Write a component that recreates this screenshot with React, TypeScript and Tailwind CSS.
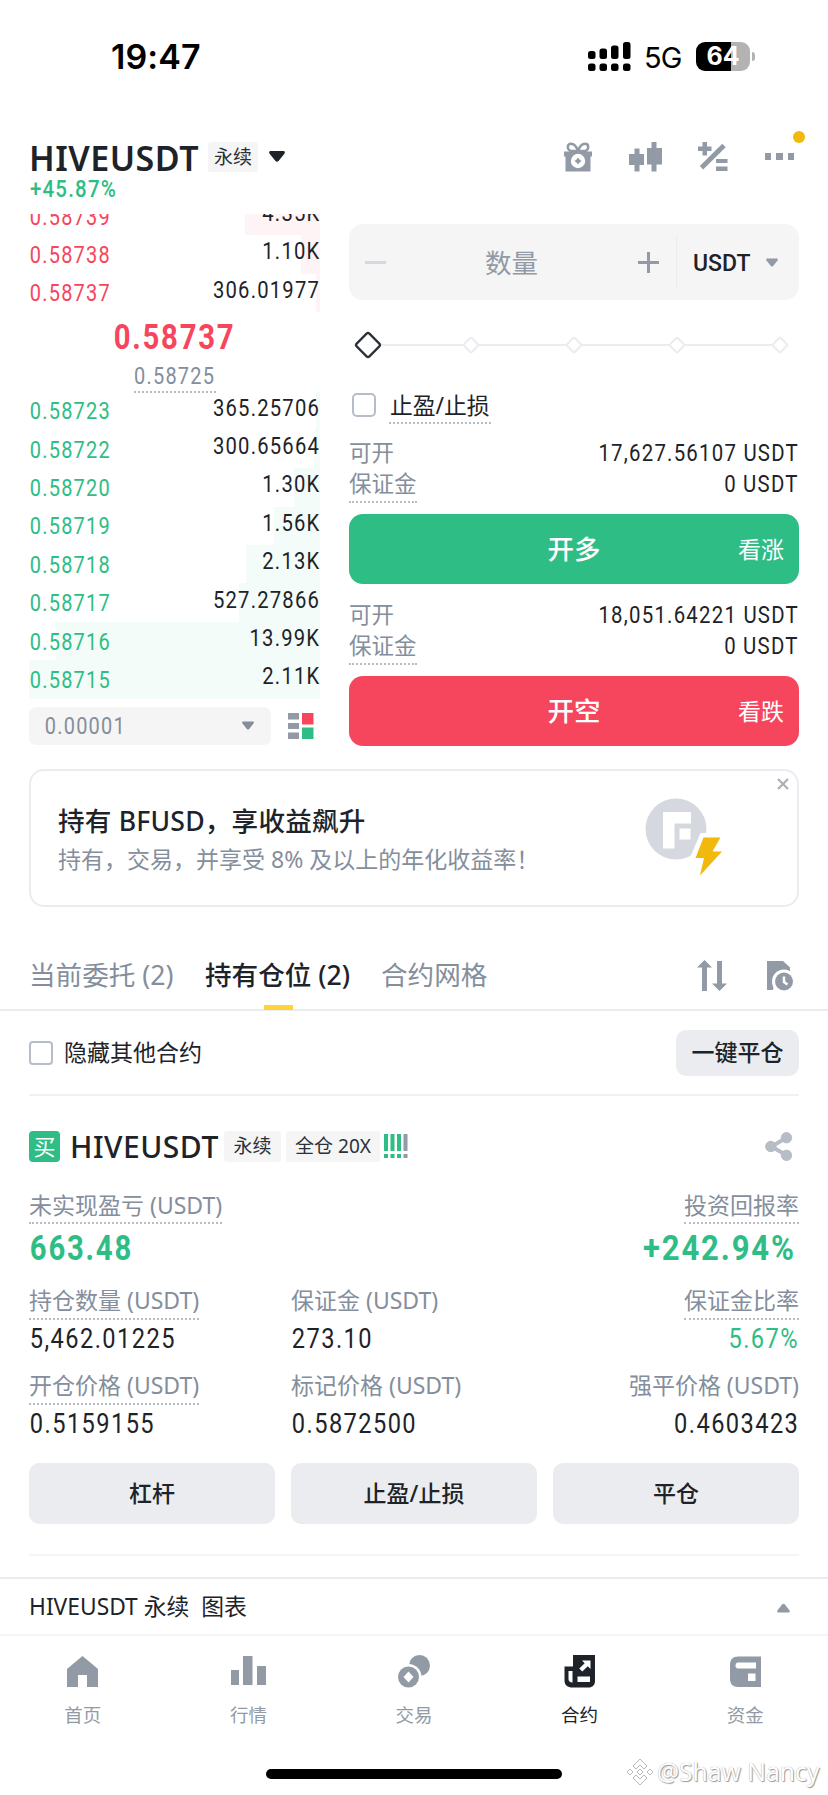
import type { ReactNode } from 'react';
import clsx from 'clsx';

type Level = { price: string; amount: string; depth: number };

const asks: Level[] = [
  { price: '0.58739', amount: '4.35K', depth: 75 },
  { price: '0.58738', amount: '1.10K', depth: 19 },
  { price: '0.58737', amount: '306.01977', depth: 4 },
];

const bids: Level[] = [
  { price: '0.58723', amount: '365.25706', depth: 4 },
  { price: '0.58722', amount: '300.65664', depth: 6 },
  { price: '0.58720', amount: '1.30K', depth: 26 },
  { price: '0.58719', amount: '1.56K', depth: 46 },
  { price: '0.58718', amount: '2.13K', depth: 74 },
  { price: '0.58717', amount: '527.27866', depth: 81 },
  { price: '0.58716', amount: '13.99K', depth: 264 },
  { price: '0.58715', amount: '2.11K', depth: 291 },
];

// Narrow, slightly spaced digits
function Num({ children, className, right }: { children: ReactNode; className?: string; right?: boolean }) {
  return (
    <span
      className={clsx(
        "inline-block scale-x-[0.85] whitespace-nowrap font-['Roboto',sans-serif] tracking-[0.06em]",
        right ? 'origin-right' : 'origin-left pl-px',
        className
      )}
    >
      {children}
    </span>
  );
}

function Dotted({ children, className }: { children: ReactNode; className?: string }) {
  return (
    <span className={clsx('border-b-2 border-dotted border-[#b7bdc6]', className)}>{children}</span>
  );
}

function Caret({ className, up }: { className?: string; up?: boolean }) {
  return (
    <svg viewBox="0 0 16 11" className={clsx(className, up && 'rotate-180')} fill="currentColor">
      <path d="M1.6 0h12.8c1 0 1.6.8 1.4 1.7-.1.7-.5 1.300-1 1.800L9.500 10c-.9 1.100-2.100 1.100-3 0L1.200 3.500C.7 3 .3 2.400.2 1.700 0 .8.600 0 1.600 0z" />
    </svg>
  );
}

function StatusBar() {
  return (
    <div className="flex h-[112px] items-center pl-[111px] pr-[73px] font-['Inter',sans-serif] text-black">
      <span className="mt-[2px] text-[34px] font-semibold leading-none tracking-[0.1px]">19:47</span>
      <svg className="ml-auto h-[29px] w-[43px]" viewBox="0 0 43 29">
        <rect x="0" y="9" width="7.500" height="8" rx="2.500" />
        <rect x="11.500" y="6.500" width="7.500" height="10.500" rx="2.500" />
        <rect x="23" y="3.500" width="7.500" height="13.500" rx="2.500" />
        <rect x="35" y="0" width="7.500" height="17" rx="2.500" />
        <rect x="0" y="21.500" width="7.500" height="7.500" rx="2.500" />
        <rect x="11.500" y="21.500" width="7.500" height="7.500" rx="2.500" />
        <rect x="23" y="21.500" width="7.500" height="7.500" rx="2.500" />
        <rect x="35" y="21.500" width="7.500" height="7.500" rx="2.500" />
      </svg>
      <span className="ml-[13px] mt-[3px] w-[38px] text-[29px] leading-none tracking-[-1px]">5G</span>
      <div className="ml-[14px] flex h-[29px] w-[54px] items-center justify-center rounded-[9px] bg-[linear-gradient(90deg,#000_64%,#b3b3b3_64%)] pt-px text-[25px] font-bold leading-none text-white">
        64
      </div>
      <div className="ml-[2px] h-[9px] w-[3px] rounded-r-full bg-[#b3b3b3]" />
    </div>
  );
}

function GiftIcon() {
  return (
    <svg className="h-[30px] w-[28px]" viewBox="0 0 28 30" fill="currentColor">
      <path d="M0 9.500h28v5h-1.500V29.500h-25v-15H0z" />
      <path d="M14 9C12 3.500 9.500 1.800 7 1.800c-2 0-3.200 1.400-3.200 3.100C3.800 7 5.500 9 8 9zM14 9c2-5.500 4.500-7.200 7-7.200 2 0 3.200 1.400 3.200 3.100C24.200 7 22.500 9 20 9z" fill="none" stroke="currentColor" strokeWidth="2.600" />
      <circle cx="14" cy="19" r="7.200" fill="#fff" />
      <path d="M14 15.500l1.500 2 2 1.500-2 1.500-1.500 2-1.500-2-2-1.500 2-1.500z" />
    </svg>
  );
}

function Header() {
  return (
    <div className="h-[102px] pl-[29px]">
      <div className="flex h-[65px] items-center pr-[34px] pt-[24px]">
        <h1 className="mt-[2px] w-[170px] text-[34px] font-semibold leading-none tracking-[0.5px] text-[#1e2329]">HIVEUSDT</h1>
        <span className="ml-[9px] flex h-[30px] w-[50px] items-center justify-center rounded-[3px] bg-[#f5f5f5] pt-px text-[19px] leading-none text-[#2b3139]">永续</span>
        <Caret className="ml-[11px] h-[11px] w-[16px] text-[#1e2329]" />
        <div className="ml-auto flex items-center text-[#929aa5]">
          <GiftIcon />
          <svg className="ml-[37px] h-[30px] w-[33px]" viewBox="0 0 33 30" fill="currentColor">
            <path d="M5.500 6.500h5V12H15v11h-4.500v6.500h-5V23H0V12h5.500zM22.500 0h5v6H33v16.500h-5.500v7h-5v-7H18V6h4.500z" />
          </svg>
          <svg className="ml-[36px] h-[30px] w-[30px]" viewBox="0 0 30 30" fill="currentColor">
            <path d="M4.500 0h4.500v4.500h4.500V9H9v4.500H4.500V9H0V4.500h4.500zM24.300 1.800l3.400 3.400-22.500 22.300-3.400-3.400zM18 17h11.500v4H18zM18 24.500h11.500v4.500H18z" />
          </svg>
          <div className="relative ml-[37px] flex gap-[5px]">
            <i className="h-[6.500px] w-[6.500px] bg-current" />
            <i className="h-[6.500px] w-[6.500px] bg-current" />
            <i className="h-[6.500px] w-[6.500px] bg-current" />
            <b className="absolute -right-[11px] -top-[22px] h-[12px] w-[12px] rounded-full bg-[#f0b90b]" />
          </div>
        </div>
      </div>
      <Num className="scale-x-[0.89]! text-[23px] font-medium leading-[26px] text-[#2ebd85]">+45.87%</Num>
    </div>
  );
}

function BookRow({ level, side }: { level: Level; side: 'ask' | 'bid' }) {
  return (
    <div className="relative flex h-[38.400px] shrink-0 items-center justify-between">
      <div
        className={clsx('absolute inset-y-0 right-0', side === 'ask' ? 'bg-[#fff4f5]' : 'bg-[#f3fcf8]')}
        style={{ width: level.depth }}
      />
      <Num className={clsx('relative mt-px text-[23.500px] font-[450] leading-[38px]', side === 'ask' ? 'text-[#f6465d]' : 'text-[#2ebd85]')}>
        {level.price}
      </Num>
      <Num right className="relative -mt-[6px] text-[23.800px] font-[450] leading-[38px] text-[#1e2329]">{level.amount}</Num>
    </div>
  );
}

function OrderBook() {
  return (
    <div className="w-[291px]">
      <div className="flex h-[98px] flex-col justify-end overflow-hidden">
        {asks.map((l) => (
          <BookRow key={l.price} level={l} side="ask" />
        ))}
      </div>
      <div className="flex h-[79.500px] flex-col items-center pt-[5px]">
        <Num className="origin-center! text-[34.500px] font-bold leading-[40px] text-[#f6465d]">0.58737</Num>
        <Dotted className="mt-px flex h-[35px] w-[82px] justify-center">
          <Num className="origin-center! text-[23.500px] leading-[36px] text-[#848e9c]">0.58725</Num>
        </Dotted>
      </div>
      {bids.map((l) => (
        <BookRow key={l.price} level={l} side="bid" />
      ))}
      <div className="mt-[8px] flex h-[38px] items-center">
        <div className="flex h-full w-[242px] items-center justify-between rounded-[7px] bg-[#f5f5f5] pl-[15px] pr-[17px] text-[#848e9c]">
          <Num className="text-[23.500px] leading-[38px]">0.00001</Num>
          <Caret className="h-[9px] w-[12px]" />
        </div>
        <svg className="ml-[17px] h-[26px] w-[26px]" viewBox="0 0 26 26">
          <path d="M0 0h11v6.500H0zM0 10h11v6H0zM0 19.500h11V26H0z" fill="#929aa5" />
          <path d="M14 0h11.500v11.500H14z" fill="#f6465d" />
          <path d="M14 14.500h11.500V26H14z" fill="#2ebd85" />
        </svg>
      </div>
    </div>
  );
}

function Slider() {
  return (
    <svg className="mt-[30px] h-[30px] w-[450px]" viewBox="0 0 450 30" fill="#fff" stroke="#eaecef" strokeWidth="2">
      <path d="M33 15H423" />
      {[122, 225, 328, 431].map((x) => (
        <rect key={x} x={x - 5.5} y="9.500" width="11" height="11" rx="1.500" transform={`rotate(45 ${x} 15)`} />
      ))}
      <rect x="10" y="6" width="18" height="18" rx="2" transform="rotate(45 19 15)" stroke="#2b3139" strokeWidth="2.300" />
    </svg>
  );
}

function SideInfo({ max }: { max: string }) {
  return (
    <div className="text-[22.500px] text-[#848e9c]">
      <div className="flex h-[30px] items-center justify-between pt-[2px]">
        <span className="leading-none">可开</span>
        <Num right className="text-[24px] font-[450] leading-none text-[#1e2329]">{max} USDT</Num>
      </div>
      <div className="flex h-[36px] items-start justify-between">
        <Dotted className="h-[36px] leading-[33px]">保证金</Dotted>
        <Num right className="text-[24px] font-[450] leading-[34px] text-[#1e2329]">0 USDT</Num>
      </div>
    </div>
  );
}

function SideButton({ label, hint, className }: { label: string; hint: string; className: string }) {
  return (
    <button className={clsx('relative flex h-[70px] w-full items-center justify-center rounded-[14px] text-white', className)}>
      <span className="text-[26.500px] font-medium leading-none">{label}</span>
      <span className="absolute right-[15px] text-[23px] leading-none">{hint}</span>
    </button>
  );
}

function TradeForm() {
  return (
    <div className="w-[450px] pt-[10px]">
      <div className="flex h-[76px] items-center rounded-[14px] bg-[#f5f5f5]">
        <i className="ml-[16px] h-[3px] w-[21px] bg-[#d5d9df]" />
        <span className="ml-[99px] mt-[3px] text-[26.500px] leading-none text-[#929aa5]">数量</span>
        <svg className="ml-auto h-[21px] w-[21px]" viewBox="0 0 21 21" fill="none" stroke="#929aa5" strokeWidth="3">
          <path d="M0 10.500h21M10.500 0v21" />
        </svg>
        <i className="ml-[17px] h-[54px] w-px bg-[#eaecef]" />
        <span className="ml-[16px] mt-[3px] w-[73px] font-['Roboto',sans-serif] text-[23px] font-medium leading-none text-[#1e2329]">USDT</span>
        <Caret className="mr-[21px] h-[9px] w-[12px] text-[#929aa5]" />
      </div>
      <Slider />
      <div className="mt-[29px] flex h-[36px] items-start">
        <i className="ml-[3px] mt-[4px] h-[24px] w-[24px] rounded-[5px] border-2 border-[#b7bdc6]" />
        <Dotted className="ml-[13px] h-[35px] px-px text-[22.800px] leading-[33px] text-[#1e2329]">止盈/止损</Dotted>
      </div>
      <div className="mt-[12px]">
        <SideInfo max="17,627.56107" />
      </div>
      <SideButton label="开多" hint="看涨" className="mt-[11px] bg-[#2ebd85]" />
      <div className="mt-[15px]">
        <SideInfo max="18,051.64221" />
      </div>
      <SideButton label="开空" hint="看跌" className="mt-[11px] bg-[#f6465d]" />
    </div>
  );
}

function Banner() {
  return (
    <div className="relative mx-[29px] mt-[23px] h-[138px] rounded-[15px] border-2 border-[#eaecef] pl-[27px] pt-[30px]">
      <div className="text-[26.600px] font-medium leading-[40px] tracking-[0.2px] text-[#1e2329]">持有 BFUSD，享收益飙升</div>
      <div className="text-[23px] leading-[36px] text-[#848e9c]">持有，交易，并享受 8% 及以上的年化收益率！</div>
      <svg className="absolute right-[8px] top-[7px] h-[12px] w-[12px]" viewBox="0 0 12 12" stroke="#a9b0ba" strokeWidth="2.200">
        <path d="M1 1l10 10M11 1L1 11" />
      </svg>
      <svg className="absolute left-[614px] top-[27px] h-[80px] w-[80px]" viewBox="0 0 80 80">
        <circle cx="31" cy="31" r="30.500" fill="#d5d9df" />
        <path d="M18 14h28v11.500H29.500V50.500H18z" fill="#fff" />
        <path d="M34.500 30.500h11v11h-11z" fill="#fff" />
        <path d="M55.500 35L44 62l13 6 10-33z" fill="#fff" />
        <path d="M58.500 39.500H75.500L67.500 53.500H77L55 77.500l4-17.500h-8.500z" fill="#f0b90b" />
      </svg>
    </div>
  );
}

function Tabs() {
  return (
    <div className="mt-[35px] flex h-[69px] items-center border-b-2 border-[#eaecef] pl-[29px] pr-[34px] text-[26.600px] leading-none text-[#848e9c]">
      <span className="w-[176px] whitespace-nowrap">当前委托 (2)</span>
      <span className="relative flex h-full w-[146px] items-center whitespace-nowrap font-medium text-[#1e2329]">
        持有仓位 (2)
        <i className="absolute -bottom-[1px] left-[59px] h-[5px] w-[29px] bg-[#fcd535]" />
      </span>
      <span className="ml-[30px]">合约网格</span>
      <svg className="ml-auto h-[31px] w-[30px]" viewBox="0 0 30 31" fill="#929aa5">
        <path d="M7.500 0L15 7.500h-5V31H5V7.500H0zM22.500 31L15 23.500h5V1h5v22.500h5z" />
      </svg>
      <svg className="ml-[40px] h-[30px] w-[27px]" viewBox="0 0 27 30">
        <path d="M0 0h16l7 6.500V10h-5L8 18 6 29H0z" fill="#929aa5" />
        <circle cx="17" cy="20.500" r="12" fill="#fff" />
        <circle cx="17" cy="20.500" r="9" fill="#929aa5" />
        <path d="M17 15.500v5.500l3.500 2.500" fill="none" stroke="#fff" strokeWidth="2.500" />
      </svg>
    </div>
  );
}

function Field({ label, value, dotted, right, green }: { label: string; value: string; dotted?: boolean; right?: boolean; green?: boolean }) {
  return (
    <div className={clsx('flex flex-col', right ? 'items-end' : 'items-start')}>
      <span
        className={clsx(
          'h-[36px] whitespace-nowrap text-[23px] leading-[32px] text-[#848e9c]',
          dotted && 'border-b-2 border-dotted border-[#b7bdc6]'
        )}
      >
        {label}
      </span>
      <Num right={right} className={clsx('text-[27.800px] font-[450] leading-[38px]', green ? 'text-[#2ebd85]' : 'text-[#1e2329]')}>
        {value}
      </Num>
    </div>
  );
}

function Position() {
  return (
    <div className="mx-[29px] border-b-2 border-[#f5f5f5] pb-[30px] pt-[34px]">
      <div className="flex h-[32px] items-center">
        <span className="flex h-[31px] w-[31px] items-center justify-center rounded-[4px] bg-[#2ebd85] text-[22px] leading-none text-white">买</span>
        <span className="ml-[10px] mt-[2px] w-[154px] text-[30px] font-medium leading-none tracking-[0.5px] text-[#1e2329]">HIVEUSDT</span>
        <span className="flex h-[31px] w-[57px] items-center justify-center rounded-[3px] bg-[#f5f5f5] text-[19px] leading-none text-[#2b3139]">永续</span>
        <span className="ml-[5px] flex h-[31px] w-[94px] items-center justify-center whitespace-nowrap rounded-[3px] bg-[#f5f5f5] text-[19px] leading-none text-[#2b3139]">全仓 20X</span>
        <svg className="ml-[4px] h-[24px] w-[24px]" viewBox="0 0 24 24">
          <path d="M0 0h4v17H0zM6.500 0h4v17h-4zM13 0h4v17h-4zM0 20h4v4H0zM6.500 20h4v4h-4zM13 20h4v4h-4z" fill="#2ebd85" />
          <path d="M19.500 0h4v17h-4zM19.500 20h4v4h-4z" fill="#929aa5" />
        </svg>
        <svg className="ml-auto mr-[6px] h-[29px] w-[28px]" viewBox="0 0 28 29" fill="#b7bdc6" stroke="#b7bdc6">
          <path d="M21 6L6.500 14.500 21 23" fill="none" strokeWidth="4" />
          <circle cx="21.500" cy="5.700" r="5.200" />
          <circle cx="5.800" cy="14.500" r="5.200" />
          <circle cx="21.500" cy="23.300" r="5.200" />
        </svg>
      </div>
      <div className="mt-[27px] flex justify-between">
        <div className="flex flex-col items-start">
          <Dotted className="h-[35px] text-[23px] leading-[32px] text-[#848e9c]">未实现盈亏 (USDT)</Dotted>
          <Num className="text-[34.500px] font-bold leading-[48px] text-[#2ebd85]">663.48</Num>
        </div>
        <div className="flex flex-col items-end">
          <Dotted className="h-[35px] text-[23px] leading-[32px] text-[#848e9c]">投资回报率</Dotted>
          <Num right className="mr-[3px] scale-x-[0.9]! text-[34.500px] font-bold leading-[48px] text-[#2ebd85]">+242.94%</Num>
        </div>
      </div>
      <div className="mt-[12px] grid grid-cols-[262px_1fr_1fr] gap-y-[11px]">
        <Field label="持仓数量 (USDT)" value="5,462.01225" dotted />
        <Field label="保证金 (USDT)" value="273.10" />
        <Field label="保证金比率" value="5.67%" dotted right green />
        <Field label="开仓价格 (USDT)" value="0.5159155" dotted />
        <Field label="标记价格 (USDT)" value="0.5872500" />
        <Field label="强平价格 (USDT)" value="0.4603423" right />
      </div>
      <div className="mt-[20px] grid grid-cols-3 gap-[16px]">
        {['杠杆', '止盈/止损', '平仓'].map((t) => (
          <button key={t} className="h-[61px] rounded-[10px] bg-[#eaecef] text-[23px] font-medium leading-none text-[#1e2329]">
            {t}
          </button>
        ))}
      </div>
    </div>
  );
}

const nav = [
  {
    label: '首页',
    icon: <path d="M16.500 1L32 14v18H21V20h-9v12H1V14z" />,
  },
  {
    label: '行情',
    icon: <path d="M-1 15h8v15H-1zM11 1h9.500v29H11zM25 11h9v19h-9z" />,
  },
  {
    label: '交易',
    icon: (
      <>
        <circle cx="22.500" cy="10.500" r="10.500" />
        <circle cx="11.500" cy="22" r="13" fill="#fff" />
        <circle cx="11.500" cy="22" r="10.500" />
        <path d="M11.500 16.500l5 5.500-5 5.500-5-5.500z" fill="#fff" />
      </>
    ),
  },
  {
    label: '合约',
    active: true,
    icon: (
      <>
        <path d="M10 0h22v26c0 4-2.500 6.500-6.500 6.500h-16C4.500 32.500 1.500 30 1.500 25.500V11.500H10z" />
        <path d="M5.500 16h4v11.500C7 27.500 5.500 26 5.500 24zM14.500 21.500H27V27H14.500zM19 5.500h8.500V14l-2.700-2.700-5.500 5.200-3-3 5.400-5.300z" fill="#fff" />
      </>
    ),
  },
  {
    label: '资金',
    icon: (
      <>
        <path d="M9 1.500h23V32H9c-5 0-8-3-8-8V9.500c0-5 3-8 8-8z" />
        <path d="M9 7.500h18v6H9a2.500 2.500 0 0 1-2.500-3c.2-2 1-3 2.500-3zM19 18.500h7.500V26H19z" fill="#fff" />
      </>
    ),
  },
];

function BottomNav() {
  return (
    <div className="relative flex h-[161px] border-t-2 border-[#f5f5f5] pt-[19px]">
      {nav.map((item) => (
        <div
          key={item.label}
          className={clsx('flex flex-1 flex-col items-center', item.active ? 'text-[#1e2329]' : 'text-[#929aa5]')}
        >
          <svg className="h-[33px] w-[33px] overflow-visible" viewBox="0 0 33 33" fill="currentColor">
            {item.icon}
          </svg>
          <span className="mt-[13px] text-[18.500px] leading-[28px]">{item.label}</span>
        </div>
      ))}
      <div className="absolute bottom-[16px] left-[266px] h-[10px] w-[296px] rounded-full bg-black" />
      <div className="absolute bottom-[7px] left-[626px] flex h-[32px] items-center gap-[3px] text-white [text-shadow:0_0_1px_#999,1px_1px_1px_#999]">
        <svg className="h-[28px] w-[28px]" viewBox="0 0 28 28" fill="#fff" stroke="#aaa" strokeWidth="0.800">
          <path d="M14 1l7 7-3 3-4-4-4 4-3-3zM14 11l3 3-3 3-3-3zM4 11l3 3-3 3-3-3zM24 11l3 3-3 3-3-3zM7 20l3-3 4 4 4-4 3 3-7 7z" />
        </svg>
        <span className="whitespace-nowrap text-[24.600px] leading-none">@Shaw Nancy</span>
      </div>
    </div>
  );
}

export default function App() {
  return (
    <div className="h-[1795px] w-[828px] overflow-hidden bg-white font-['Noto_Sans','Noto_Sans_CJK_SC',sans-serif]">
      <StatusBar />
      <Header />
      <div className="flex justify-between px-[29px]">
        <OrderBook />
        <TradeForm />
      </div>
      <Banner />
      <Tabs />
      <div className="mx-[29px] flex h-[85px] items-center border-b-2 border-[#f0f1f3]">
        <i className="h-[24px] w-[24px] rounded-[4px] border-2 border-[#b7bdc6]" />
        <span className="ml-[11px] text-[23px] leading-none text-[#1e2329]">隐藏其他合约</span>
        <button className="ml-auto h-[46px] w-[123px] rounded-[10px] bg-[#eaecef] text-[23px] font-medium leading-none text-[#1e2329]">
          一键平仓
        </button>
      </div>
      <Position />
      <div className="mt-[21px] flex h-[57px] items-center justify-between border-t-2 border-[#eaecef] pl-[29px] pr-[38px] pt-[2px]">
        <span className="whitespace-pre text-[22.800px] leading-none text-[#1e2329]">HIVEUSDT 永续&nbsp; 图表</span>
        <Caret up className="h-[10px] w-[13px] text-[#929aa5]" />
      </div>
      <BottomNav />
    </div>
  );
}
